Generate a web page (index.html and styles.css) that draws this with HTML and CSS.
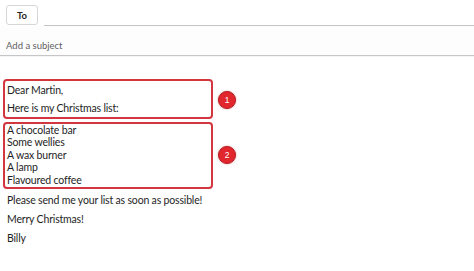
FILE: index.html
```html
<!DOCTYPE html>
<html>
<head>
<meta charset="utf-8">
<link rel="stylesheet" href="styles.css">
</head>
<body>
<div class="compose">
  <div class="to-row">
    <button class="to-btn">To</button>
    <div class="to-field"></div>
  </div>
  <div class="subject-row">
    <span class="subject-placeholder">Add a subject</span>
  </div>
  <div class="message">
    <div class="annotated">
      <div class="box box-one">
        <p>Dear Martin,</p>
        <p class="gap">Here is my Christmas list:</p>
      </div>
      <span class="badge">1</span>
    </div>
    <div class="annotated">
      <div class="box box-two">
        <div>A chocolate bar</div>
        <div>Some wellies</div>
        <div>A wax burner</div>
        <div>A lamp</div>
        <div>Flavoured coffee</div>
      </div>
      <span class="badge">2</span>
    </div>
    <p class="para first">Please send me your list as soon as possible!</p>
    <p class="para">Merry Christmas!</p>
    <p class="para">Billy</p>
  </div>
</div>
</body>
</html>
```
FILE: styles.css
```css
* { box-sizing: border-box; }
html, body { margin: 0; padding: 0; background: #ffffff; }
body {
  width: 474px;
  height: 271px;
  overflow: hidden;
  font-family: "Lato", "Liberation Sans", sans-serif;
  color: #1e1e1e;
}
.to-row {
  display: flex;
  align-items: flex-end;
  padding: 5px 0 0 6px;
  height: 26px;
}
.to-btn {
  width: 32px;
  height: 20px;
  border: 1px solid #d6d6d6;
  border-radius: 3px;
  background: #fff;
  font-family: inherit;
  font-size: 9.5px;
  font-weight: 700;
  color: #242424;
  padding: 0;
  margin: 0 0 1px 0;
}
.to-field {
  flex: 1;
  margin-left: 6px;
  border-bottom: 1px solid #c4c4c4;
  height: 20px;
}
.subject-row {
  height: 30px;
  display: flex;
  align-items: flex-end;
  padding: 0 0 3px 6px;
  background: #fdfdfd;
  border-bottom: 1px solid #c6c6c6;
  box-shadow: 0 1px 1px rgba(0,0,0,0.04);
}
.subject-placeholder {
  font-size: 9.5px;
  line-height: 12px;
  color: #616161;
}
.message {
  padding: 23px 0 0 3px;
  font-size: 10.5px;
  line-height: 12.6px;
  letter-spacing: -0.17px;
}
.message p { margin: 0; }
.annotated {
  display: flex;
  align-items: center;
}
.box {
  width: 210px;
  border: 2px solid #d2363f;
  border-radius: 4px;
  padding: 0 2px;
}
.box-one { padding-top: 3px; padding-bottom: 2px; margin-bottom: 3px; }
.box-one .gap { margin-top: 5.5px; }
.badge {
  width: 18px;
  height: 18px;
  margin-left: 5px;
  border-radius: 50%;
  background: #e1262d;
  border: 1px solid #b71c22;
  box-shadow: 0 0 2px rgba(200,30,30,0.5);
  color: #fff;
  font-size: 8.5px;
  line-height: 16px;
  letter-spacing: 0;
  text-align: center;
  font-family: "Liberation Sans", sans-serif;
}
.para { padding-left: 4px; margin-top: 6.5px !important; }
.para.first { margin-top: 5px !important; }
```
